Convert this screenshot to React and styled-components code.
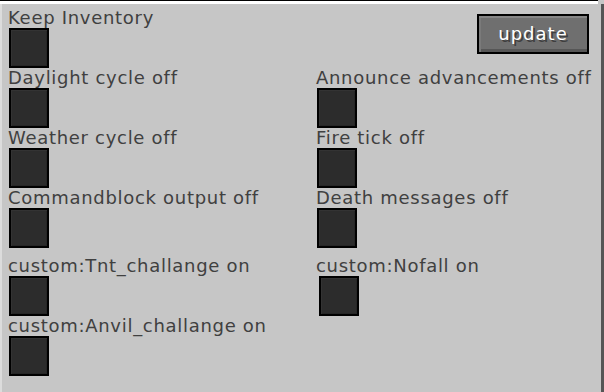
import React from "react";
import styled, { createGlobalStyle } from "styled-components";

const GlobalStyle = createGlobalStyle`
  html, body {
    margin: 0;
    padding: 0;
    background: #c6c6c6;
  }
  * {
    box-sizing: border-box;
  }
`;

const Screen = styled.div`
  width: 604px;
  height: 392px;
  display: flex;
  background: #c6c6c6;
  overflow: hidden;
  font-family: "DejaVu Sans", "Liberation Sans", sans-serif;
  font-size: 18px;
  letter-spacing: 0.7px;
`;

const Panel = styled.div`
  flex: 1;
  border-top: 1px solid #000;
  box-shadow: inset 0 3px 0 #fff, inset 2px 0 0 #dcdcdc;
  padding: 7px 0 0 8px;
  display: grid;
  grid-template-columns: 308px 1fr;
  grid-auto-rows: min-content;
  align-content: start;
`;

const RightEdge = styled.div`
  width: 6px;
  margin-top: 4px;
  background: linear-gradient(to right, #c6c6c6 3px, #555 3px);
`;

const Option = styled.div`
  display: flex;
  flex-direction: column;
  align-items: flex-start;
  margin-top: ${(p) => (p.$gap ? "8px" : "0")};
`;

const Label = styled.span`
  display: block;
  height: 20px;
  line-height: 20px;
  color: #404040;
  white-space: nowrap;
`;

const Box = styled.div`
  width: 40px;
  height: 40px;
  margin-left: ${(p) => p.$shift || 1}px;
  border: 2px solid #000;
  background: #2c2c2c;
  box-shadow: inset 1px 1px 0 #333, inset -1px -1px 0 #262626;
`;

const UpdateButton = styled.button`
  justify-self: end;
  align-self: start;
  margin: 6px 9px 0 0;
  width: 112px;
  height: 40px;
  border: 2px solid #000;
  background: #6f6f6f;
  box-shadow: inset 0 2px 0 #858585, inset 2px 0 0 #7a7a7a, inset 0 -3px 0 #565656;
  color: #fff;
  font-family: inherit;
  font-size: 18px;
  letter-spacing: 1px;
  text-shadow: 2px 2px 0 #3f3f3f;
  padding: 0 0 2px;
  cursor: pointer;
`;

const Empty = styled.div``;

const rows = [
  ["Keep Inventory", "button"],
  ["Daylight cycle off", "Announce advancements off"],
  ["Weather cycle off", "Fire tick off"],
  ["Commandblock output off", "Death messages off"],
  ["custom:Tnt_challange on", "custom:Nofall on"],
  ["custom:Anvil_challange on", null],
];

const Setting = ({ label, gap, shift }) => (
  <Option $gap={gap}>
    <Label>{label}</Label>
    <Box $shift={shift} />
  </Option>
);

const App = () => {
  return (
    <>
      <GlobalStyle />
      <Screen>
        <Panel>
          {rows.map(([left, right], i) => {
            const gap = i === 4;
            return (
              <React.Fragment key={i}>
                <Setting label={left} gap={gap} />
                {right === "button" ? (
                  <UpdateButton>update</UpdateButton>
                ) : right ? (
                  <Setting label={right} gap={gap} shift={right === "custom:Nofall on" ? 3 : 1} />
                ) : (
                  <Empty />
                )}
              </React.Fragment>
            );
          })}
        </Panel>
        <RightEdge />
      </Screen>
    </>
  );
};

export default App;
